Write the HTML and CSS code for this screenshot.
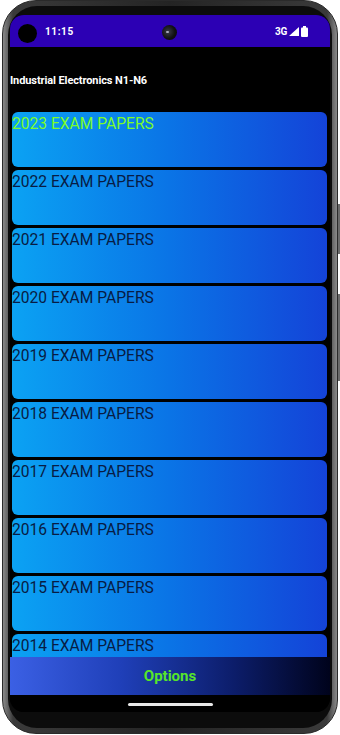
FILE: index.html
```html
<!DOCTYPE html>
<html>
<head>
<meta charset="utf-8">
<link rel="stylesheet" href="styles.css">
</head>
<body>
<div class="phone">
  <span class="side-btn side-btn-a"></span>
  <span class="side-btn side-btn-b"></span>
  <div class="bezel">
    <div class="screen">
      <div class="status">
        <span class="dot"></span>
        <span class="time">11:15</span>
        <span class="camera"><span class="lens"></span></span>
        <span class="sys">
          <span class="net">3G</span>
          <svg class="sig" width="10" height="9" viewBox="0 0 10 9"><path d="M10 0 L10 9 L0 9 Z" fill="#fff"/></svg>
          <svg class="bat" width="7" height="11" viewBox="0 0 7 11"><rect x="2" y="0" width="3" height="2" fill="#fff"/><rect x="0" y="1.5" width="7" height="9.5" rx="1" fill="#fff"/></svg>
        </span>
      </div>
      <div class="header">Industrial Electronics N1-N6</div>
      <div class="list">
        <div class="item current">2023 EXAM PAPERS</div>
        <div class="item">2022 EXAM PAPERS</div>
        <div class="item">2021 EXAM PAPERS</div>
        <div class="item">2020 EXAM PAPERS</div>
        <div class="item">2019 EXAM PAPERS</div>
        <div class="item">2018 EXAM PAPERS</div>
        <div class="item">2017 EXAM PAPERS</div>
        <div class="item">2016 EXAM PAPERS</div>
        <div class="item">2015 EXAM PAPERS</div>
        <div class="item">2014 EXAM PAPERS</div>
      </div>
      <div class="options">Options</div>
      <div class="nav"><span class="pill"></span></div>
    </div>
  </div>
</div>
</body>
</html>
```

FILE: styles.css
```css
html, body {
  margin: 0;
  padding: 0;
  background: #ffffff;
  overflow: hidden;
  font-family: Roboto, "Liberation Sans", sans-serif;
}

.phone {
  position: relative;
  box-sizing: border-box;
  width: 336px;
  height: 734px;
  margin-left: 2px;
  padding: 5px;
  border-radius: 34px;
  background: linear-gradient(90deg, #8a8a8a 0%, #3a3a3a 3%, #242424 50%, #3a3a3a 97%, #8a8a8a 100%);
  border: 1px solid #2a2a2a;
}

.side-btn {
  position: absolute;
  right: -3px;
  width: 2px;
  background: #6a6a6a;
}
.side-btn-a { top: 203px; height: 50px; }
.side-btn-b { top: 293px; height: 87px; }

.bezel {
  box-sizing: border-box;
  height: 100%;
  padding: 9px 2px 16px 2px;
  border-radius: 29px;
  background: #0c0c0c;
}

.screen {
  display: flex;
  flex-direction: column;
  height: 697px;
  border-radius: 14px;
  overflow: hidden;
  background: #000;
}

.status {
  position: relative;
  flex: 0 0 32px;
  display: flex;
  align-items: center;
  padding: 0 8px;
  background: #2c00b4;
  color: #fff;
}

.dot {
  width: 19px;
  height: 19px;
  margin-top: 4px;
  border-radius: 50%;
  background: #000;
}

.time {
  margin-left: 8px;
  font-size: 10px;
  font-weight: 700;
  letter-spacing: 0.6px;
}

.camera {
  position: absolute;
  left: 152px;
  top: 10px;
  width: 15px;
  height: 15px;
  border-radius: 50%;
  background: radial-gradient(circle at 40% 45%, #3a3a4a 0%, #111 55%, #050505 100%);
}
.lens {
  position: absolute;
  left: 4px;
  top: 6px;
  width: 3px;
  height: 2px;
  border-radius: 1px;
  background: #aab;
}

.sys {
  margin-left: auto;
  margin-right: 14px;
  display: flex;
  align-items: center;
  gap: 2px;
}
.net {
  font-size: 10px;
  font-weight: 700;
  letter-spacing: -0.3px;
}

.header {
  flex: 0 0 65px;
  box-sizing: border-box;
  padding: 27px 0 0 0;
  color: #fff;
  font-size: 11px;
  font-weight: 700;
  letter-spacing: -0.1px;
  white-space: nowrap;
}

.list {
  flex: 0 0 545px;
  overflow: hidden;
  padding: 0 3px 0 2px;
}

.item {
  box-sizing: border-box;
  height: 55px;
  margin-bottom: 3px;
  padding: 3px 0 0 0;
  border-radius: 6px;
  background: linear-gradient(90deg, #0ba2f3 0%, #0a74e6 50%, #1443d8 100%);
  color: #081c44;
  font-size: 15.6px;
  line-height: 18px;
  white-space: nowrap;
}
.item.current {
  color: #7cfc2a;
}

.options {
  flex: 0 0 38px;
  display: flex;
  align-items: center;
  justify-content: center;
  background: linear-gradient(90deg, #3b60e4 0%, #1f3fb8 35%, #0c1d6a 70%, #00031c 100%);
  color: #56e62a;
  font-size: 15px;
  font-weight: 700;
}

.nav {
  flex: 1 1 auto;
  display: flex;
  justify-content: center;
  padding-top: 8px;
  background: #000;
}
.pill {
  width: 85px;
  height: 3px;
  border-radius: 2px;
  background: #e8e8e8;
}
```
